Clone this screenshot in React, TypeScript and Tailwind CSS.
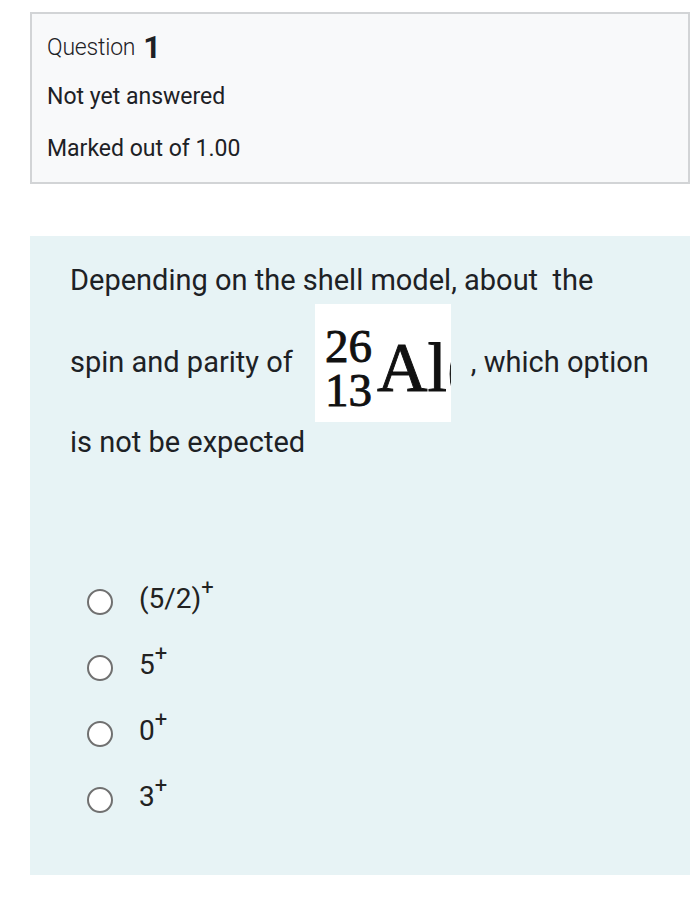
const options = [
  { base: "(5/2)", sup: "+" },
  { base: "5", sup: "+" },
  { base: "0", sup: "+" },
  { base: "3", sup: "+" },
];

const Nuclide = () => (
  <div className="w-[136px] h-[118px] bg-white overflow-hidden shrink-0">
    <svg width="136" height="118" viewBox="0 0 136 118">
      <g fill="#111" stroke="#111" strokeWidth="0.9" fontFamily="'Liberation Serif', 'Times New Roman', serif">
        <text x="10" y="58" fontSize="47">26</text>
        <text x="10" y="102" fontSize="47">13</text>
        <text x="62" y="87" fontSize="70">Al(</text>
      </g>
    </svg>
  </div>
);

const App = () => {
  return (
    <div className="w-[700px] h-[910px] bg-white text-[#1d2125] font-['Roboto','Liberation_Sans',sans-serif] pt-3">
      <section className="ml-[30px] w-[660px] h-[172px] border-2 border-[#d2d4d6] bg-[#f8f9fa] pl-[15px] pt-4">
        <div className="h-9 flex items-center gap-2">
          <span className="text-[23px] font-light tracking-[-0.2px]">Question</span>
          <span className="text-[31px] font-bold">1</span>
        </div>
        <div className="mt-[13px] h-9 leading-9 text-[23px]">Not yet answered</div>
        <div className="mt-4 h-9 leading-9 text-[23px]">Marked out of 1.00</div>
      </section>

      <section className="mt-[52px] ml-[30px] w-[660px] h-[639px] bg-[#e7f3f5] pl-10 pt-6">
        <div className="text-[29px] h-10 leading-10">Depending on the shell model, about&nbsp; the</div>
        <div className="mt-1 flex items-center h-[118px] text-[29px]">
          <span>spin and parity of</span>
          <div className="ml-[22px]">
            <Nuclide />
          </div>
          <span className="ml-[20px]">, which option</span>
        </div>
        <div className="text-[29px] h-10 leading-10">is not be expected</div>

        <div className="mt-[107px] flex flex-col">
          {options.map((o) => (
            <label key={o.base} className="h-[66px] flex items-center">
              <span className="ml-[17px] w-[26px] h-[26px] rounded-full border-2 border-[#707070] bg-white shrink-0" />
              <span className="ml-[26px] -mt-[4px] text-[28px] leading-9 text-[#222]">
                {o.base}
                <span className="text-[22px] relative -top-[13px]">{o.sup}</span>
              </span>
            </label>
          ))}
        </div>
      </section>
    </div>
  );
};

export default App;
